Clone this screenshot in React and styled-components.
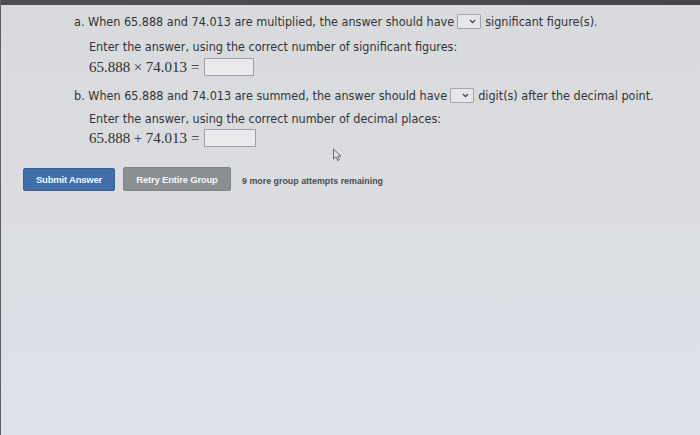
import React from "react";
import styled, { createGlobalStyle } from "styled-components";

const Global = createGlobalStyle`
  html, body { margin: 0; padding: 0; }
  body { width: 700px; height: 435px; overflow: hidden; }
`;

const Screen = styled.div`
  position: relative;
  width: 700px;
  height: 435px;
  box-sizing: border-box;
  border-left: 1px solid #5e5f64;
  background: linear-gradient(180deg, #d9dadd 0%, #dbdde1 50%, #dde2ea 100%);
  font-family: "DejaVu Sans Condensed", "DejaVu Sans", sans-serif;
  color: #333437;
  overflow: hidden;
`;

const TopBar = styled.div`
  height: 5px;
  background: linear-gradient(90deg, #4f4f53 0%, #46464a 100%);
`;

const Content = styled.div`
  display: flex;
  flex-direction: column;
  gap: 8px;
  padding: 6px 0 0 73px;
`;

const Part = styled.div`
  display: flex;
  flex-direction: column;
`;

const Row = styled.div`
  height: 20px;
  display: flex;
  align-items: center;
  white-space: nowrap;
  font-size: 12.5px;
  margin-top: ${(p) => p.$gap || 0}px;
  padding-left: ${(p) => (p.$indent ? 15 : 0)}px;
`;

const Select = styled.span`
  display: inline-flex;
  align-items: center;
  justify-content: flex-end;
  box-sizing: border-box;
  width: 24px;
  height: 15px;
  margin: 0 4px 0 3px;
  padding-right: 4px;
  background: #e6e7ea;
  border: 1px solid #a3a5aa;
  border-radius: 1px;
`;

const Math = styled.span`
  font-family: "Liberation Serif", "Times New Roman", serif;
  font-size: 15px;
  color: #2f3032;
  display: inline-flex;
  align-items: center;
`;

const Op = styled.span`
  margin: 0 ${(p) => p.$space}px;
`;

const AnswerBox = styled.span`
  display: inline-block;
  box-sizing: border-box;
  width: ${(p) => p.$w}px;
  height: 18px;
  margin-left: 1px;
  background: #e9eaec;
  border: 1px solid #9fa1a6;
`;

const Actions = styled.div`
  display: flex;
  align-items: center;
  gap: 8px;
  margin: 19px 0 0 22px;
`;

const Button = styled.div`
  box-sizing: border-box;
  width: ${(p) => p.$w}px;
  height: ${(p) => p.$h}px;
  display: flex;
  align-items: center;
  justify-content: center;
  border-radius: 2px;
  font-family: "Liberation Sans", Arial, sans-serif;
  font-weight: 700;
  font-size: 9.5px;
  letter-spacing: -0.2px;
  color: #f4f6fa;
  background: ${(p) => p.$bg};
  border: 1px solid ${(p) => p.$border};
`;

const Remaining = styled.span`
  margin-left: 3px;
  font-family: "Liberation Sans", Arial, sans-serif;
  font-weight: 700;
  font-size: 8.9px;
  color: #4c4e52;
  padding-top: 4px;
`;

const Cursor = styled.svg`
  position: absolute;
  left: 331px;
  top: 148px;
`;

const Chevron = () => (
  <svg width="7" height="5" viewBox="0 0 7 5">
    <path d="M1 1 L3.5 3.6 L6 1" fill="none" stroke="#3c3d40" strokeWidth="1.2" />
  </svg>
);

export default function App() {
  return (
    <>
      <Global />
      <Screen>
        <TopBar />
        <Content>
          <Part>
            <Row>
              a. When 65.888 and 74.013 are multiplied, the answer should have
              <Select>
                <Chevron />
              </Select>
              significant figure(s).
            </Row>
            <Row $indent $gap={5}>
              Enter the answer, using the correct number of significant figures:
            </Row>
            <Row $indent $gap={1}>
              <Math>
                65.888<Op $space={3.5}>×</Op>74.013<Op $space={4}>=</Op>
              </Math>
              <AnswerBox $w={50} />
            </Row>
          </Part>
          <Part>
            <Row>
              b. When 65.888 and 74.013 are summed, the answer should have
              <Select>
                <Chevron />
              </Select>
              digit(s) after the decimal point.
            </Row>
            <Row $indent $gap={3}>
              Enter the answer, using the correct number of decimal places:
            </Row>
            <Row $indent $gap={0}>
              <Math>
                65.888<Op $space={3.5}>+</Op>74.013<Op $space={4}>=</Op>
              </Math>
              <AnswerBox $w={52} />
            </Row>
          </Part>
        </Content>
        <Actions>
          <Button $w={92} $h={23} $bg="#3f6eab" $border="#35619a">
            Submit Answer
          </Button>
          <Button $w={108} $h={24} $bg="#8b8e93" $border="#7f8287">
            Retry Entire Group
          </Button>
          <Remaining>9 more group attempts remaining</Remaining>
        </Actions>
        <Cursor width="12" height="14" viewBox="0 0 12 14">
          <path
            d="M1.5 1 L1.5 11 L4 8.8 L5.8 12.6 L7.4 11.9 L5.7 8.2 L9 8.2 Z"
            fill="#e2e4e8"
            stroke="#6a6c71"
            strokeWidth="1"
            strokeLinejoin="round"
          />
        </Cursor>
      </Screen>
    </>
  );
}
